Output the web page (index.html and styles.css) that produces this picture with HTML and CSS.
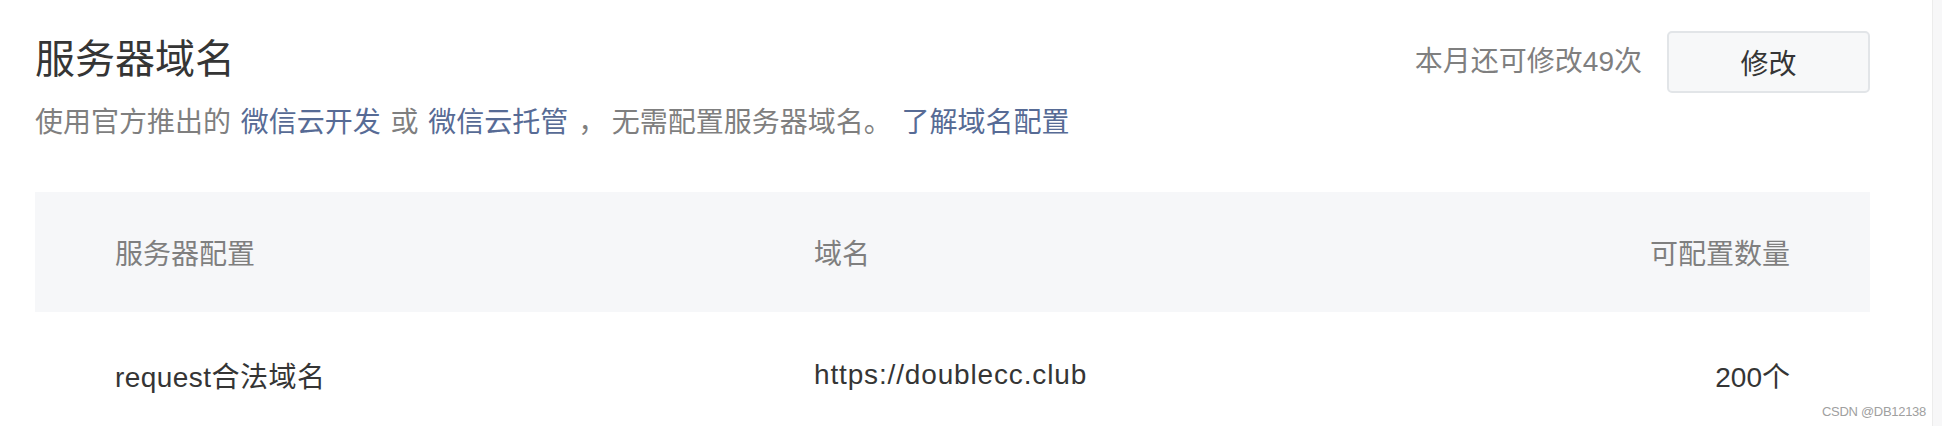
FILE: index.html
```html
<!DOCTYPE html>
<html lang="zh-CN">
<head>
<meta charset="utf-8">
<title>服务器域名</title>
<link rel="stylesheet" href="styles.css">
</head>
<body>
<div class="page">
  <main class="content">
    <section class="panel">
      <header class="panel-head">
        <div class="head-info">
          <h2 class="title">服务器域名</h2>
          <p class="desc">使用官方推出的 <a class="link" href="#">微信云开发</a> 或 <a class="link" href="#">微信云托管</a> ，&thinsp;无需配置服务器域名。 <a class="link" href="#">了解域名配置</a></p>
        </div>
        <div class="head-ops">
          <span class="quota">本月还可修改49次</span>
          <button class="btn" type="button">修改</button>
        </div>
      </header>
      <div class="table">
        <div class="row row-head">
          <div class="cell">服务器配置</div>
          <div class="cell">域名</div>
          <div class="cell cell-right">可配置数量</div>
        </div>
        <div class="row row-body">
          <div class="cell cell-latin">request合法域名</div>
          <div class="cell cell-url">https://doublecc.club</div>
          <div class="cell cell-right">200个</div>
        </div>
      </div>
    </section>
  </main>
  <aside class="side-strip"></aside>
</div>
<div class="watermark">CSDN @DB12138</div>
</body>
</html>
```

FILE: styles.css
```css
html, body {
  margin: 0;
  padding: 0;
  background: #ffffff;
  height: 100%;
  overflow: hidden;
}

body {
  font-family: "Liberation Sans", "Noto Sans CJK SC", sans-serif;
  color: #353535;
  position: relative;
}

.page {
  display: flex;
  height: 426px;
}

.content {
  width: 1932px;
  flex: none;
}

.side-strip {
  flex: 1;
  background: #f7f7f8;
  border-left: 1px solid #ececec;
}

.panel {
  width: 1835px;
  margin-left: 35px;
}

.panel-head {
  display: flex;
  justify-content: space-between;
  align-items: flex-start;
  padding-top: 31px;
}

.title {
  margin: 0;
  font-size: 40px;
  line-height: 56px;
  font-weight: 400;
  color: #353535;
}

.desc {
  margin: 16px 0 0;
  font-size: 28px;
  line-height: 40px;
  color: #7f7f7f;
  word-spacing: 2px;
  white-space: nowrap;
}

.link {
  color: #576b95;
  text-decoration: none;
}

.head-ops {
  display: flex;
  align-items: center;
  gap: 25px;
}

.quota {
  font-size: 28px;
  line-height: 40px;
  color: #7f7f7f;
}

.btn {
  width: 203px;
  height: 62px;
  box-sizing: border-box;
  border: 2px solid #e2e5e8;
  border-radius: 5px;
  background: #f7f8f9;
  font-family: inherit;
  font-size: 28px;
  color: #353535;
  padding: 0;
}

.table {
  margin-top: 49px;
}

.row {
  display: grid;
  grid-template-columns: 699px 1fr auto;
  align-items: center;
  height: 120px;
  padding: 0 80px;
  font-size: 28px;
}

.row-head {
  background: #f6f7f9;
  color: #7f7f7f;
}

.row-body {
  color: #353535;
  padding-top: 3px;
}

.cell-latin {
  letter-spacing: 0.45px;
}

.cell-url {
  letter-spacing: 0.85px;
}

.cell-right {
  text-align: right;
}

.watermark {
  position: absolute;
  left: 1822px;
  top: 403px;
  font-size: 13px;
  line-height: 18px;
  color: #a0a0a0;
  font-family: "Liberation Sans", sans-serif;
  letter-spacing: -0.3px;
}
```
